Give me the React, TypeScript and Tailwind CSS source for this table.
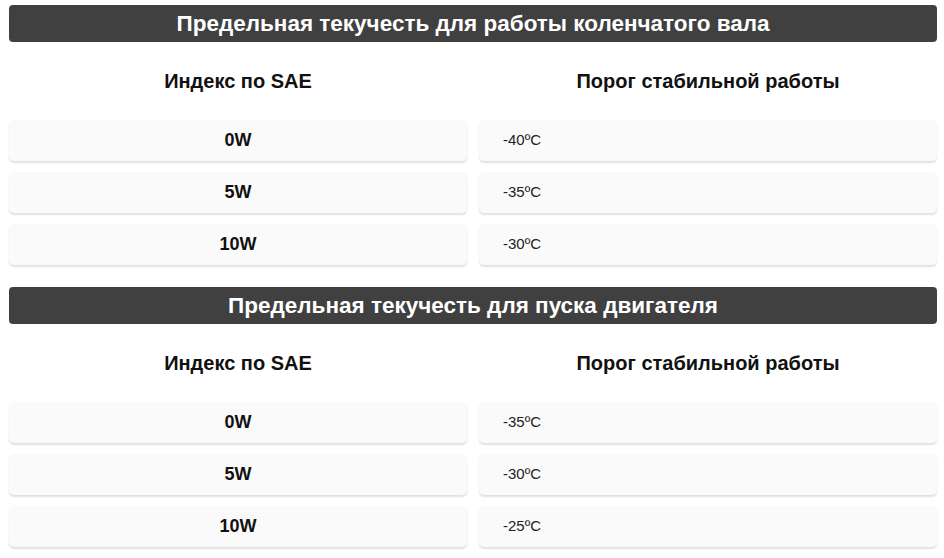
import React from "react";

const sections = [
  {
    title: "Предельная текучесть для работы коленчатого вала",
    rows: [
      ["0W", "-40ºC"],
      ["5W", "-35ºC"],
      ["10W", "-30ºC"],
    ],
  },
  {
    title: "Предельная текучесть для пуска двигателя",
    rows: [
      ["0W", "-35ºC"],
      ["5W", "-30ºC"],
      ["10W", "-25ºC"],
    ],
  },
];

export default function App() {
  return (
    <div
      className="w-[944px] h-[558px] bg-white pt-[5px] pl-[9px] overflow-hidden"
      style={{ fontFamily: '"Liberation Sans", Arial, sans-serif' }}
    >
      <div className="w-[928px] flex flex-col gap-[22px]">
        {sections.map((s, i) => (
          <div key={i} className="flex flex-col">
            <div className="h-[37px] rounded-[4px] bg-[#404040] flex items-center justify-center text-white font-bold text-[22.5px]">
              {s.title}
            </div>
            <div className="h-[78px] grid grid-cols-2 gap-[12px] items-center text-[20px] font-bold text-[#111]">
              <div className="text-center">Индекс по SAE</div>
              <div className="text-center">Порог стабильной работы</div>
            </div>
            <div className="flex flex-col gap-[11px]">
              {s.rows.map((r, j) => (
                <div key={j} className="grid grid-cols-2 gap-[12px]">
                  <div className="h-[41px] rounded-[5px] bg-[#fafafa] shadow-[0_2px_2px_rgba(0,0,0,0.12)] flex items-center justify-center font-bold text-[18px] text-[#111]">
                    {r[0]}
                  </div>
                  <div className="h-[41px] rounded-[5px] bg-[#fafafa] shadow-[0_2px_2px_rgba(0,0,0,0.12)] flex items-center pl-[24px] text-[15px] text-[#222]">
                    {r[1]}
                  </div>
                </div>
              ))}
            </div>
          </div>
        ))}
      </div>
    </div>
  );
}
